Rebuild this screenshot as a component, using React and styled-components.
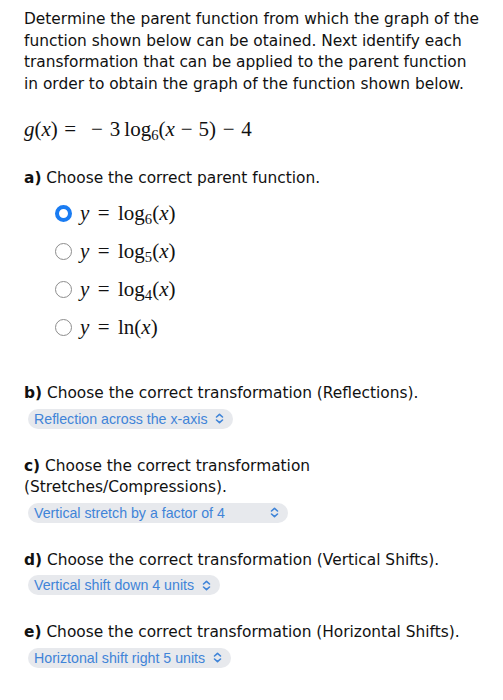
import React from 'react';
import styled, { createGlobalStyle } from 'styled-components';

const GlobalStyle = createGlobalStyle`
  html, body {
    margin: 0;
    background: #fff;
  }
`;

const Page = styled.div`
  padding: 9px 20px 0 24px;
  color: #111;
  font-family: 'DejaVu Sans', Verdana, sans-serif;
  font-size: 15.4px;
  line-height: 21.6px;
`;

const Intro = styled.p`
  margin: 0;
`;

const Math = styled.span`
  font-family: 'Liberation Serif', 'DejaVu Serif', serif;
  font-size: 21px;
  white-space: nowrap;
`;

const Equation = styled.div`
  margin-top: 22px;
  line-height: 24px;
`;

const Var = styled.i`
  font-style: italic;
`;

const Op = styled.span`
  display: inline-block;
  margin-left: ${({ left = 0.28 }) => left}em;
  margin-right: ${({ right = 0.28 }) => right}em;
`;

const Sub = styled.sub`
  font-size: 0.7em;
  line-height: 0;
  vertical-align: -0.28em;
`;

const Question = styled.div`
  margin-top: ${({ gap }) => gap}px;
`;

const Letter = styled.b`
  font-weight: bold;
`;

const RadioList = styled.div`
  margin-top: 5px;
  padding-left: 31px;
`;

const RadioRow = styled.label`
  display: flex;
  align-items: center;
  height: 38px;
  gap: 8px;
`;

const Radio = styled.span`
  box-sizing: border-box;
  width: 17px;
  height: 17px;
  border-radius: 50%;
  background: #fff;
  border: ${({ checked }) => (checked ? '4.5px solid #1a7cf2' : '1.5px solid #8d8d8d')};
  flex: none;
`;

const SelectRow = styled.div`
  line-height: 0;
  padding-left: 4px;
  margin-top: 4px;
`;

const Select = styled.div`
  box-sizing: border-box;
  height: 20px;
  width: ${({ width }) => (width ? `${width}px` : 'auto')};
  display: inline-flex;
  align-items: center;
  justify-content: space-between;
  gap: 8px;
  padding: 0 9px 0 6px;
  border-radius: 10px;
  background: #e7e9ed;
  color: #3f84d8;
  font-family: 'Liberation Sans', Arial, sans-serif;
  font-size: 14.2px;
  line-height: 20px;
`;

function Chevrons() {
  return (
    <svg width="9" height="11" viewBox="0 0 9 11" fill="none" stroke="#3f84d8" strokeWidth="1.6" strokeLinecap="round" strokeLinejoin="round">
      <path d="M1.5 4 L4.5 1.3 L7.5 4" />
      <path d="M1.5 7 L4.5 9.7 L7.5 7" />
    </svg>
  );
}

function Dropdown({ value, width }) {
  return (
    <SelectRow>
      <Select width={width}>
        <span>{value}</span>
        <Chevrons />
      </Select>
    </SelectRow>
  );
}

const options = [
  { base: '6', checked: true },
  { base: '5' },
  { base: '4' },
  { ln: true },
];

export default function App() {
  return (
    <>
      <GlobalStyle />
      <Page>
        <Intro>
          Determine the parent function from which the graph of the function shown below can be otained. Next identify each
          transformation that can be applied to the parent function in order to obtain the graph of the function shown below.
        </Intro>
        <Equation>
          <Math>
            <Var>g</Var>(<Var>x</Var>)<Op left={0.3} right={0.72}>=</Op>
            <Op left={0} right={0.32}>−</Op>3<Op left={0.2} right={0} />log<Sub>6</Sub>(<Var>x</Var>
            <Op>−</Op>5)<Op left={0.32} right={0.32}>−</Op>4
          </Math>
        </Equation>

        <Question gap={25}>
          <Letter>a)</Letter> Choose the correct parent function.
        </Question>
        <RadioList>
          {options.map((o, i) => (
            <RadioRow key={i}>
              <Radio checked={o.checked} />
              <Math>
                <Var>y</Var>
                <Op left={0.4} right={0.4}>=</Op>
                {o.ln ? 'ln' : <>log<Sub>{o.base}</Sub></>}(<Var>x</Var>)
              </Math>
            </RadioRow>
          ))}
        </RadioList>

        <Question gap={36}>
          <Letter>b)</Letter> Choose the correct transformation (Reflections).
        </Question>
        <Dropdown value="Reflection across the x-axis" />

        <Question gap={27}>
          <Letter>c)</Letter> Choose the correct transformation
          <br />
          (Stretches/Compressions).
        </Question>
        <Dropdown value="Vertical stretch by a factor of 4" width={260} />

        <Question gap={27}>
          <Letter>d)</Letter> Choose the correct transformation (Vertical Shifts).
        </Question>
        <Dropdown value="Vertical shift down 4 units" />

        <Question gap={27}>
          <Letter>e)</Letter> Choose the correct transformation (Horizontal Shifts).
        </Question>
        <Dropdown value="Horiztonal shift right 5 units" />
      </Page>
    </>
  );
}
